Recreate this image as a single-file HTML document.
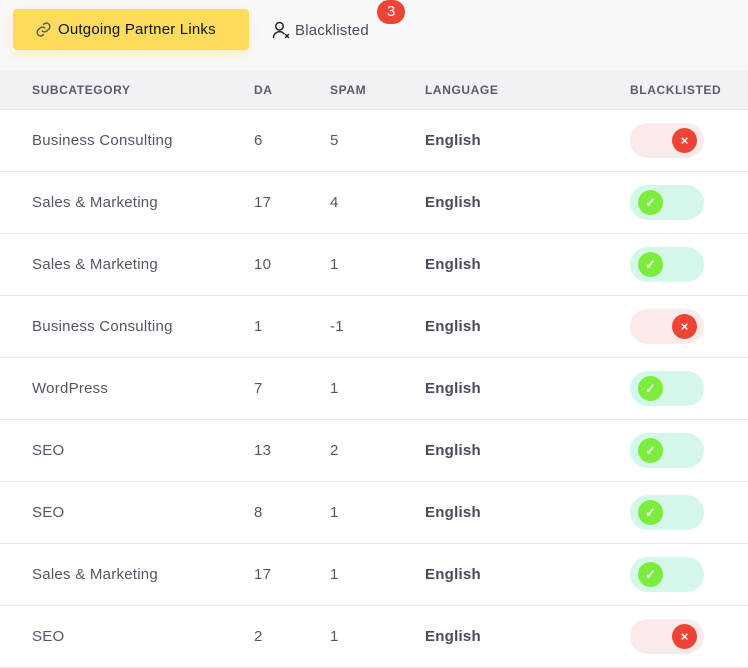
<!DOCTYPE html><html><head><style>
body{margin:0;width:748px;height:666px;overflow:hidden;background:#fff;font-family:"Liberation Sans",sans-serif;}
.top{height:70px;background:#f8f8f9;position:relative}
.btn{position:absolute;left:13px;top:9px;width:236px;height:41px;background:#fddc5c;border-radius:4px;box-shadow:0 4px 12px rgba(253,220,92,.35);font-size:15px;color:#111;display:flex;align-items:center;box-sizing:border-box;padding-left:22px;letter-spacing:.2px}
.btn svg{margin-right:6px}
.bl{position:absolute;left:272px;top:21px;font-size:15px;color:#4a4a5e;display:flex;align-items:center;letter-spacing:.2px}
.badge{position:absolute;left:377px;top:0;width:28px;height:24px;border-radius:12px;background:#ee4436;color:#fff;font-size:15px;text-align:center;line-height:24px}
table{border-collapse:collapse;width:748px;table-layout:fixed}
th,td{padding:0}
th{height:39px;background:#f2f2f6;font-size:12px;font-weight:bold;color:#5a5a6e;text-align:left;letter-spacing:.6px;border-bottom:1px solid #e4e4ec}
td{height:61px;border-bottom:1px solid #e6e6ee;font-size:15px;color:#555566;letter-spacing:.25px}
td.l{font-weight:bold;color:#4a4a5a}
.t{width:74px;height:35px;border-radius:18px;position:relative}
.t i{position:absolute;top:5px;width:25px;height:25px;border-radius:50%;color:#fff;font-style:normal;font-size:13px;text-align:center;line-height:25px;font-weight:bold;letter-spacing:0}
.r{background:#fbeaea}.r i{background:#ee4436;left:42px}
.g{background:#d3f8ea}.g i{background:#7ded3d;left:8px}
</style></head><body>
<div class="top">
<div class="btn"><svg width="17" height="17" viewBox="0 0 24 24" fill="none" stroke="#555" stroke-width="2" stroke-linecap="round"><path d="M10 14a5 5 0 0 0 7 0l3-3a5 5 0 0 0-7-7l-1 1"/><path d="M14 10a5 5 0 0 0-7 0l-3 3a5 5 0 0 0 7 7l1-1"/></svg>Outgoing Partner Links</div>
<div class="bl"><svg width="18" height="18" viewBox="0 0 24 24" fill="none" stroke="#222" stroke-width="2" stroke-linecap="round"><circle cx="10" cy="7" r="5"/><path d="M2 22a8 8 0 0 1 14-5"/><path d="M18 18l4 4M22 18l-4 4"/></svg><span style="margin-left:5px">Blacklisted</span></div>
<div class="badge">3</div>
</div>
<table>
<colgroup><col style="width:254px"><col style="width:76px"><col style="width:95px"><col style="width:205px"><col style="width:118px"></colgroup>
<tr><th style="padding-left:32px">SUBCATEGORY</th><th>DA</th><th>SPAM</th><th>LANGUAGE</th><th>BLACKLISTED</th></tr>
<tr><td style="padding-left:32px">Business Consulting</td><td>6</td><td>5</td><td class="l">English</td><td><div class="t r"><i>×</i></div></td></tr>
<tr><td style="padding-left:32px">Sales &amp; Marketing</td><td>17</td><td>4</td><td class="l">English</td><td><div class="t g"><i>✓</i></div></td></tr>
<tr><td style="padding-left:32px">Sales &amp; Marketing</td><td>10</td><td>1</td><td class="l">English</td><td><div class="t g"><i>✓</i></div></td></tr>
<tr><td style="padding-left:32px">Business Consulting</td><td>1</td><td>-1</td><td class="l">English</td><td><div class="t r"><i>×</i></div></td></tr>
<tr><td style="padding-left:32px">WordPress</td><td>7</td><td>1</td><td class="l">English</td><td><div class="t g"><i>✓</i></div></td></tr>
<tr><td style="padding-left:32px">SEO</td><td>13</td><td>2</td><td class="l">English</td><td><div class="t g"><i>✓</i></div></td></tr>
<tr><td style="padding-left:32px">SEO</td><td>8</td><td>1</td><td class="l">English</td><td><div class="t g"><i>✓</i></div></td></tr>
<tr><td style="padding-left:32px">Sales &amp; Marketing</td><td>17</td><td>1</td><td class="l">English</td><td><div class="t g"><i>✓</i></div></td></tr>
<tr><td style="padding-left:32px">SEO</td><td>2</td><td>1</td><td class="l">English</td><td><div class="t r"><i>×</i></div></td></tr>
</table>
</body></html>
